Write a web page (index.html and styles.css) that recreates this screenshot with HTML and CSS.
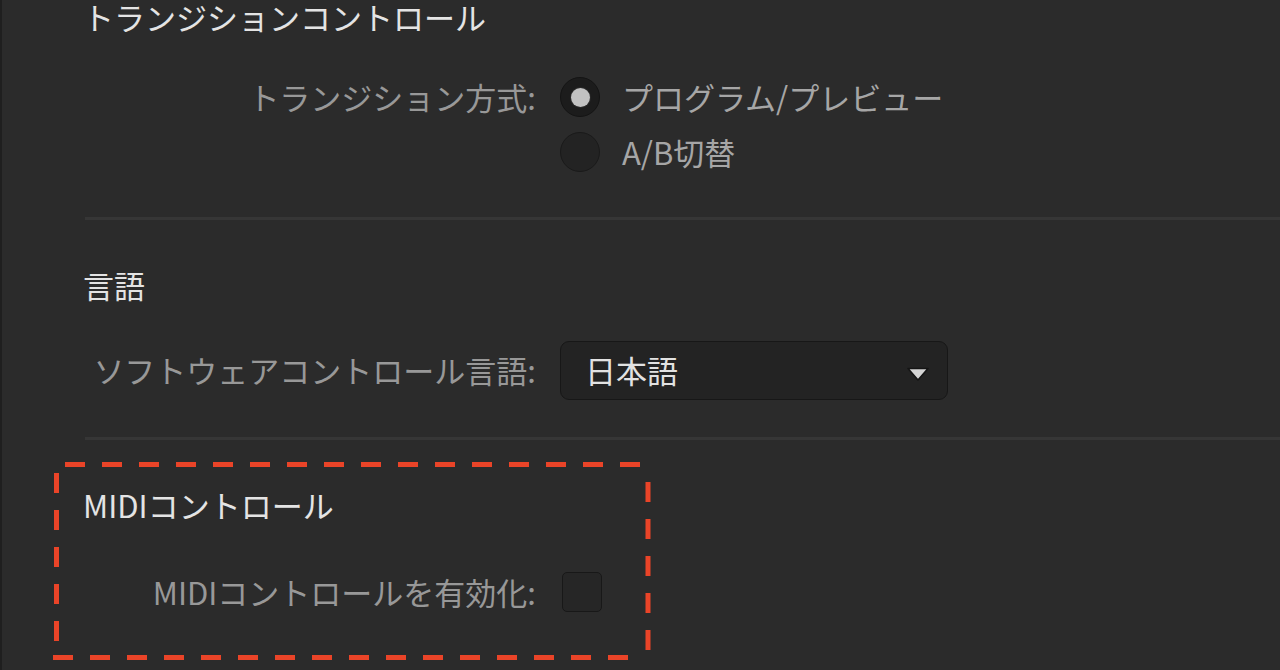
FILE: index.html
```html
<!DOCTYPE html>
<html lang="ja">
<head>
<meta charset="utf-8">
<title>設定</title>
<link rel="stylesheet" href="styles.css">
</head>
<body>
<div class="page">
  <section class="group group-first">
    <h2 class="group-title">トランジションコントロール</h2>
    <div class="row row-top">
      <div class="label label-radio">トランジション方式:</div>
      <div class="radios">
        <div class="radio-option">
          <span class="radio radio-on"><span class="radio-dot"></span></span>
          <span class="option-text">プログラム/プレビュー</span>
        </div>
        <div class="radio-option">
          <span class="radio"></span>
          <span class="option-text">A/B切替</span>
        </div>
      </div>
    </div>
  </section>
  <div class="divider"></div>
  <section class="group group-lang">
    <h2 class="group-title">言語</h2>
    <div class="row">
      <div class="label">ソフトウェアコントロール言語:</div>
      <div class="select">
        <span class="select-text">日本語</span>
        <svg class="select-arrow" width="24" height="16" viewBox="0 0 24 16"><path d="M2 2.5 H22 L12 14 Z" fill="#d4d4d4" stroke="#151515" stroke-width="1.6" stroke-linejoin="round"/></svg>
      </div>
    </div>
  </section>
  <div class="divider"></div>
  <section class="group group-midi">
    <h2 class="group-title">MIDIコントロール</h2>
    <div class="row">
      <div class="label">MIDIコントロールを有効化:</div>
      <span class="checkbox"></span>
    </div>
  </section>
</div>
<svg class="annotation" width="1280" height="670" viewBox="0 0 1280 670">
  <g stroke="#ea4428" stroke-width="5" stroke-dasharray="20 17" fill="none">
    <path d="M65 464.5 H650"/>
    <path d="M56.5 473 V645"/>
    <path d="M648 482 V655"/>
    <path d="M53 657.5 H640"/>
  </g>
</svg>
</body>
</html>
```
FILE: styles.css
```css
html, body {
  margin: 0;
  padding: 0;
  height: 100%;
  overflow: hidden;
}
body {
  background: #2b2b2b;
  font-family: "Noto Sans CJK JP", "Noto Sans", sans-serif;
  font-size: 31px;
  border-left: 2px solid #1f1f1f;
  box-sizing: border-box;
  position: relative;
}
.page {
  padding-left: 81px;
}
.group {
  display: flex;
  flex-direction: column;
}
.group-first { padding-bottom: 40px; }
.group-lang { padding-top: 45px; padding-bottom: 37px; }
.group-midi { padding-top: 45px; }
.group-title {
  margin: 0 0 35px 0;
  font-size: 31px;
  font-weight: 400;
  line-height: 40px;
  height: 40px;
  color: #e4e4e4;
  white-space: nowrap;
}
.group-first .group-title {
  line-height: 34px;
  height: 34px;
  margin-bottom: 38px;
}
.group-midi .group-title {
  margin-bottom: 37px;
}
.row {
  display: grid;
  grid-template-columns: 453px auto;
  column-gap: 24px;
  align-items: center;
  min-height: 60px;
  justify-content: start;
}
.row-top {
  align-items: start;
  min-height: 0;
}
.label {
  text-align: right;
  color: #989898;
  line-height: 40px;
  white-space: nowrap;
  justify-self: end;
}
.label-radio {
  margin-top: 5px;
}
.radios {
  display: flex;
  flex-direction: column;
  gap: 5px;
}
.radio-option {
  display: flex;
  align-items: center;
  height: 50px;
  gap: 22px;
}
.radio {
  width: 40px;
  height: 40px;
  border-radius: 50%;
  background: #232323;
  border: 1px solid #1a1a1a;
  box-sizing: border-box;
  display: flex;
  align-items: center;
  justify-content: center;
  flex-shrink: 0;
}
.radio-on {
  background: #1c1c1c;
  border: 1px solid #141414;
}
.radio-dot {
  width: 19px;
  height: 19px;
  border-radius: 50%;
  background: #c2c2c2;
  box-shadow: 0 0 0 1px #2a2a2a;
}
.option-text {
  color: #a6a6a6;
  line-height: 40px;
  white-space: nowrap;
}
.select {
  width: 388px;
  height: 59px;
  box-sizing: border-box;
  border-radius: 9px;
  background: #232323;
  border: 1px solid #171717;
  display: flex;
  align-items: center;
  justify-content: space-between;
  padding: 0 17px 0 24px;
}
.select-text {
  color: #e2e2e2;
  line-height: 40px;
}
.select-arrow {
  margin-top: 7px;
}
.checkbox {
  width: 40px;
  height: 40px;
  box-sizing: border-box;
  border-radius: 5px;
  background: #262626;
  border: 1px solid #181818;
  margin-left: 2px;
}
.divider {
  height: 3px;
  background: #363636;
  margin-left: 2px;
}
.annotation {
  position: absolute;
  left: -2px;
  top: 0;
  pointer-events: none;
}
```
